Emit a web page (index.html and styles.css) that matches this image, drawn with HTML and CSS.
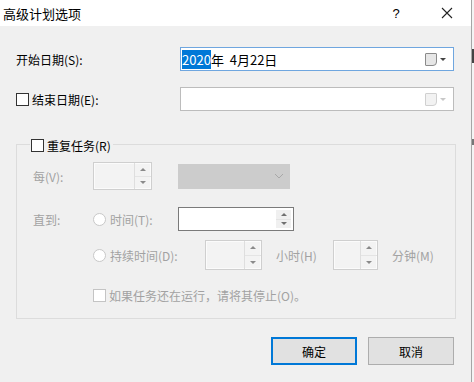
FILE: index.html
```html
<!DOCTYPE html>
<html lang="zh-CN">
<head>
  <meta charset="UTF-8">
  <title>高级计划选项</title>
  <link rel="stylesheet" href="styles.css">
</head>
<body>
  <div class="screen">
    <div class="window">
      <div class="titlebar">
        <span class="title">高级计划选项</span>
        <span class="help">?</span>
        <span class="close">
          <svg width="12" height="12" viewBox="0 0 12 12"><path d="M1 1 L11 11 M11 1 L1 11" stroke="#222" stroke-width="1.1" fill="none"/></svg>
        </span>
      </div>

      <div class="content">
        <div class="row row-start">
          <span class="label">开始日期(S):</span>
          <div class="date focus">
            <span class="date-text"><span class="sel">2020</span>年&nbsp; 4月22日</span>
            <span class="cal"></span>
            <span class="caret"></span>
          </div>
        </div>

        <div class="row row-end">
          <span class="label"><span class="check"></span>结束日期(E):</span>
          <div class="date disabled">
            <span class="date-text"></span>
            <span class="cal"></span>
            <span class="caret"></span>
          </div>
        </div>

        <div class="group">
          <div class="legend"><span class="check"></span>重复任务(R)</div>

          <div class="grow grow-every">
            <span class="glabel">每(V):</span>
            <div class="spin spin-every">
              <span class="spin-field"></span>
              <span class="spin-btns"><span><i class="up"></i></span><span><i class="down"></i></span></span>
            </div>
            <div class="combo">
              <svg width="10" height="6" viewBox="0 0 10 6"><path d="M1 1 L5 5 L9 1" stroke="#a8a8a8" stroke-width="1" fill="none"/></svg>
            </div>
          </div>

          <div class="grow grow-until">
            <span class="glabel">直到:</span>
            <span class="radio-label rl-time"><span class="radio"></span>时间(T):</span>
            <div class="spin spin-time">
              <span class="spin-field"></span>
              <span class="spin-btns"><span><i class="up"></i></span><span><i class="down"></i></span></span>
            </div>
          </div>

          <div class="grow grow-dur">
            <span class="glabel"></span>
            <span class="radio-label rl-dur"><span class="radio"></span>持续时间(D):</span>
            <div class="spin spin-hours">
              <span class="spin-field"></span>
              <span class="spin-btns"><span><i class="up"></i></span><span><i class="down"></i></span></span>
            </div>
            <span class="unit unit-h">小时(H)</span>
            <div class="spin spin-mins">
              <span class="spin-field"></span>
              <span class="spin-btns"><span><i class="up"></i></span><span><i class="down"></i></span></span>
            </div>
            <span class="unit unit-m">分钟(M)</span>
          </div>

          <div class="grow grow-stop">
            <span class="glabel"></span>
            <span class="radio-label"><span class="check off"></span>如果任务还在运行，请将其停止(O)。</span>
          </div>
        </div>

        <div class="buttons">
          <button class="btn default">确定</button>
          <button class="btn">取消</button>
        </div>
      </div>
    </div>
    <div class="edge">
      <span class="mark mark-1"></span>
      <span class="mark mark-2"></span>
    </div>
  </div>
</body>
</html>
```

FILE: styles.css
```css
body {
  margin: 0;
  padding: 0;
  font-family: "Microsoft YaHei UI", "Noto Sans CJK SC", sans-serif;
  font-size: 12px;
  background-color: #ffffff;
}
.screen {
  display: flex;
  width: 474px;
  height: 382px;
  overflow: hidden;
}
.window {
  width: 471px;
  height: 382px;
  border-right: 1px solid #a6a6a6;
  background-color: #f0f0f0;
  display: flex;
  flex-direction: column;
}
.edge {
  flex: 1;
  background-color: #f4f4f4;
  display: flex;
  flex-direction: column;
}
.mark {
  display: block;
  background-color: #444;
  width: 2px;
}
.mark-1 { margin-top: 49px; height: 14px; }
.mark-2 { margin-top: 76px; height: 6px; background-color: #777; }

/* title */
.titlebar {
  height: 26px;
  background-color: #ffffff;
  display: flex;
  align-items: center;
}
.title {
  flex: 1;
  padding-left: 3px;
  font-size: 13px;
  color: #000;
}
.help {
  width: 20px;
  text-align: center;
  font-family: "Liberation Sans", sans-serif;
  font-size: 13px;
  margin-right: 29px;
}
.close {
  width: 24px;
  display: flex;
  justify-content: center;
  margin-right: 12px;
}

.content {
  display: flex;
  flex-direction: column;
}

/* top rows */
.row {
  display: flex;
  align-items: center;
  height: 24px;
}
.row-start { margin-top: 21px; }
.row-end { margin-top: 16px; }
.label {
  width: 164px;
  padding-left: 16px;
  display: flex;
  align-items: center;
  color: #000;
}
.check {
  width: 11px;
  height: 11px;
  border: 1px solid #333;
  background: #fff;
  margin-right: 3px;
  flex: none;
}
.check.off {
  border-color: #c4c4c4;
}
.date {
  width: 274px;
  height: 24px;
  box-sizing: border-box;
  border: 1px solid #6fa6df;
  background: #fff;
  display: flex;
  align-items: center;
}
.date.disabled {
  border-color: #bcbcbc;
}
.date-text {
  flex: 1;
  padding-left: 1px;
  font-size: 13px;
  color: #000;
}
.sel {
  background-color: #0078d7;
  color: #fff;
}
.cal {
  width: 10px;
  height: 11px;
  border: 1px solid #8a8a8a;
  background: #e6e6e6;
  border-radius: 1px;
  border-bottom-right-radius: 4px;
  margin-right: 3px;
}
.caret {
  width: 0;
  height: 0;
  border-left: 3px solid transparent;
  border-right: 3px solid transparent;
  border-top: 3px solid #444;
  margin-right: 7px;
}
.disabled .cal {
  border-color: #d0d0d0;
  background: #f2f2f2;
}
.disabled .caret {
  border-top-color: #c8c8c8;
}

/* group box */
.group {
  position: relative;
  margin-top: 33px;
  margin-left: 16px;
  width: 440px;
  height: 175px;
  box-sizing: border-box;
  border: 1px solid #dcdcdc;
  padding: 17px 0 0 16px;
}
.legend {
  position: absolute;
  top: -8px;
  left: 13px;
  padding: 0 2px 0 1px;
  background-color: #f0f0f0;
  display: flex;
  align-items: center;
  color: #000;
  height: 16px;
}
.grow {
  display: flex;
  align-items: center;
  color: #a2a2a2;
}
.grow-every { height: 28px; }
.grow-until { height: 24px; margin-top: 17px; }
.grow-dur { height: 30px; margin-top: 9px; }
.grow-stop { height: 14px; margin-top: 18px; }
.glabel {
  width: 60px;
  flex: none;
}
.radio-label {
  display: flex;
  align-items: center;
  flex: none;
}
.rl-time { width: 85px; }
.rl-dur { width: 112px; }
.radio {
  width: 11px;
  height: 11px;
  border: 1px solid #c8c8c8;
  border-radius: 50%;
  background: #fff;
  margin-right: 4px;
}

/* spin boxes */
.spin {
  display: flex;
  box-sizing: border-box;
  border: 1px solid #cfcfcf;
  background: #f3f3f3;
  box-shadow: inset 0 0 0 1px #fbfbfb;
  flex: none;
}
.spin-field {
  flex: 1;
}
.spin-btns {
  width: 16px;
  display: flex;
  flex-direction: column;
  border-left: 1px solid #dedede;
}
.spin-btns span {
  flex: 1;
  display: flex;
  align-items: center;
  justify-content: center;
}
.spin-btns span + span {
  border-top: 1px solid #e4e4e4;
}
.up, .down {
  width: 0;
  height: 0;
  border-left: 3px solid transparent;
  border-right: 3px solid transparent;
}
.up { border-bottom: 3px solid #8a8a8a; }
.down { border-top: 3px solid #8a8a8a; }
.spin-every { width: 59px; height: 28px; }
.spin-hours { width: 57px; height: 30px; }
.spin-mins { width: 45px; height: 30px; }
.spin-time {
  width: 116px;
  height: 24px;
  border-color: #7a7a7a;
  background: #fff;
  box-shadow: none;
  padding: 2px 2px 2px 0;
}
.spin-time .spin-btns {
  background: #f0f0f0;
  border-left: none;
  width: 15px;
}
.spin-time .up { border-bottom-color: #707070; }
.spin-time .down { border-top-color: #707070; }

.combo {
  margin-left: 26px;
  width: 112px;
  height: 25px;
  background-color: #cccccc;
  display: flex;
  align-items: center;
  justify-content: flex-end;
  padding-right: 6px;
  box-sizing: border-box;
}
.unit-h { margin-left: 14px; width: 57px; }
.unit-m { margin-left: 14px; }

/* buttons */
.buttons {
  margin-top: 18px;
  display: flex;
  justify-content: flex-end;
  gap: 11px;
  padding-right: 17px;
}
.btn {
  width: 86px;
  height: 28px;
  box-sizing: border-box;
  background-color: #e1e1e1;
  border: 1px solid #adadad;
  font-family: "Microsoft YaHei UI", "Noto Sans CJK SC", sans-serif;
  font-size: 12px;
  color: #000;
  padding: 0;
}
.btn.default {
  border: 2px solid #0078d7;
}
```
